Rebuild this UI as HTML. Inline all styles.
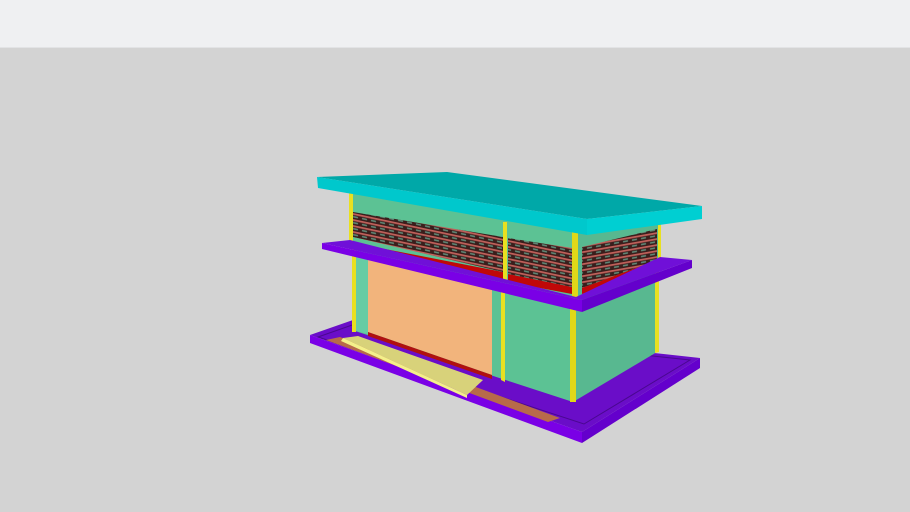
<!DOCTYPE html>
<html><head><style>
html,body{margin:0;padding:0;width:910px;height:512px;overflow:hidden;background:#d3d3d3}
.top{position:absolute;left:0;top:0;width:910px;height:47px;background:#eff0f2;border-bottom:1px solid #e2e3e5}
svg{position:absolute;left:0;top:0}
</style></head><body>
<div class="top"></div>
<svg width="910" height="512" viewBox="0 0 910 512">
<defs>
<pattern id="lv" width="9" height="6" patternUnits="userSpaceOnUse" patternTransform="skewY(12)">
<rect width="9" height="6" fill="#3a1e1c"/>
<rect y="0" width="9" height="1.8" fill="#c0605a"/>
<rect x="2" y="2.8" width="5" height="1.6" fill="#5f8a78"/>
</pattern>
<pattern id="lv2" width="9" height="6" patternUnits="userSpaceOnUse" patternTransform="skewY(-10)">
<rect width="9" height="6" fill="#3a1e1c"/>
<rect y="0" width="9" height="1.8" fill="#c0605a"/>
<rect x="2" y="2.8" width="5" height="1.6" fill="#5f8a78"/>
</pattern>
</defs>
<!-- base slab -->
<polygon points="310,335 353,320 700,358 582,432" fill="#6a0dc8"/>
<polygon points="310,335 582,432 582,443 310,343" fill="#7a00e6"/>
<polygon points="582,432 700,358 700,368 582,443" fill="#6400cc"/>
<polygon points="318,337 355,324 690,360 584,424" fill="none" stroke="#4a0890" stroke-width="1"/>
<!-- brown strip and ramp -->
<polygon points="326,340 340,337 560,418 548,422" fill="#b86a4a"/>
<polygon points="343,338 358,336 483,380 467,395" fill="#d8d27a"/>
<polygon points="343,338 467,395 467,398 341,341" fill="#f4f08a"/>
<!-- lower walls -->
<polygon points="352,245 573,295 573,402 352,330" fill="#5cc294"/>
<polygon points="573,295 657,265 657,352 573,402" fill="#58b890"/>
<polygon points="352,245 368,249 368,334 352,330" fill="#66cca4"/>
<polygon points="368,255 492,285 492,375 368,332" fill="#f2b47c"/>
<polygon points="368,332 492,375 492,379 368,336" fill="#b01010"/>
<rect x="352" y="245" width="4" height="87" fill="#e8e020"/>
<polygon points="501,285 505,286 505,382 501,380" fill="#e8e020"/>
<polygon points="570,295 576,295 576,402 570,402" fill="#e0d818"/>
<polygon points="655,270 659,270 659,352 655,353" fill="#e8e020"/>
<!-- upper walls -->
<polygon points="350,190 576,225 576,297 350,241" fill="#5cc294"/>
<polygon points="576,225 660,215 660,257 576,297" fill="#58b890"/>
<polygon points="353,212 503,237 503,272 353,237" fill="url(#lv)"/>
<polygon points="508,238 572,248 572,287 508,274" fill="url(#lv)"/>
<polygon points="582,247 657,229 657,260 582,288" fill="url(#lv2)"/>
<polygon points="380,248 503,272 503,280" fill="#c00808"/>
<polygon points="508,274 572,287 572,294 508,282" fill="#c00808"/>
<polygon points="582,288 657,260 657,266 582,294" fill="#c00808"/>
<rect x="349" y="190" width="4" height="52" fill="#e8e020"/>
<rect x="503" y="222" width="4" height="58" fill="#e8e020"/>
<rect x="572" y="226" width="6" height="72" fill="#e0d818"/>
<rect x="658" y="215" width="3" height="43" fill="#e8e020"/>
<!-- mid slab (visible top strip in front of walls) -->
<polygon points="322,243 350,240 576,297 660,257 692,260 582,300" fill="#7010d8"/>
<polygon points="322,243 582,300 582,312 322,249" fill="#7a00e6"/>
<polygon points="582,300 692,260 692,268 582,312" fill="#6400cc"/>
<!-- roof -->
<polygon points="317,177 447,172 702,206 587,219" fill="#00a8a8"/>
<polygon points="317,177 587,219 587,235 318,188" fill="#00c8cc"/>
<polygon points="587,219 702,206 702,219 587,235" fill="#00cfd2"/>
</svg>
</body></html>
